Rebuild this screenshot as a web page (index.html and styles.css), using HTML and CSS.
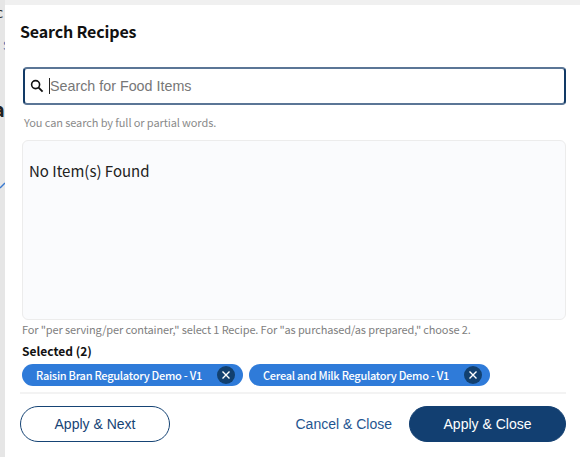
FILE: index.html
```html
<!DOCTYPE html>
<html lang="en">
<head>
<meta charset="utf-8">
<title>Search Recipes</title>
<link rel="stylesheet" href="styles.css">
</head>
<body>
<div class="backdrop">
  <span class="bg-band"></span>
  <span class="bg-a">c</span>
  <span class="bg-s">S</span>
  <span class="bg-b">a</span>
  <svg class="bg-tick" viewBox="0 0 5 8" width="5" height="8" aria-hidden="true"><path d="M0 7 L5 2" stroke="#3a7ad0" stroke-width="1.4" fill="none"/></svg>
</div>
<div class="modal">
  <h1 class="title">Search Recipes</h1>
  <div class="search">
    <svg class="search-icon" viewBox="0 0 14 14" width="14" height="14" aria-hidden="true"><circle cx="5.6" cy="5.6" r="4" fill="none" stroke="#111" stroke-width="1.6"/><path d="M8.6 8.6 L12.6 12.6" stroke="#111" stroke-width="1.8" fill="none"/></svg>
    <span class="caret"></span>
    <span class="placeholder">Search for Food Items</span>
  </div>
  <p class="hint">You can search by full or partial words.</p>
  <div class="results">No Item(s) Found</div>
  <p class="note">For "per serving/per container," select 1 Recipe. For "as purchased/as prepared," choose 2.</p>
  <div class="selected-label">Selected (2)</div>
  <div class="chips">
    <span class="chip">Raisin Bran Regulatory Demo - V1<span class="chip-x"><svg viewBox="0 0 10 10" width="10" height="10" aria-hidden="true"><path d="M1.5 1.5 L8.5 8.5 M8.5 1.5 L1.5 8.5" stroke="#fff" stroke-width="1.4" fill="none"/></svg></span></span>
    <span class="chip">Cereal and Milk Regulatory Demo - V1<span class="chip-x"><svg viewBox="0 0 10 10" width="10" height="10" aria-hidden="true"><path d="M1.5 1.5 L8.5 8.5 M8.5 1.5 L1.5 8.5" stroke="#fff" stroke-width="1.4" fill="none"/></svg></span></span>
  </div>
  <div class="footer">
    <button class="btn btn-outline">Apply &amp; Next</button>
    <div class="footer-right">
      <button class="btn-link">Cancel &amp; Close</button>
      <button class="btn btn-solid">Apply &amp; Close</button>
    </div>
  </div>
</div>
</body>
</html>
```
FILE: styles.css
```css
* { box-sizing: border-box; }
html, body { margin: 0; height: 100%; }
body {
  width: 580px;
  height: 457px;
  overflow: hidden;
  background: #f0f0f0;
  font-family: "Noto Sans CJK SC", "Noto Sans", sans-serif;
  padding: 5px 0 0 5px;
  position: relative;
}
.backdrop { position: absolute; inset: 0; overflow: hidden; }
.bg-band { position: absolute; left: 0; top: 0; width: 5px; height: 457px; background: #e6e6e6; }
.bg-a { position: absolute; left: -4px; top: 2px; font-size: 14px; color: #333; }
.bg-s { position: absolute; left: 3px; top: 36px; font-size: 12px; color: #3a6fb0; }
.bg-b { position: absolute; left: -7px; top: 94px; font-size: 20px; font-weight: 700; color: #222; }
.bg-tick { position: absolute; left: 0; top: 181px; }
.modal {
  position: relative;
  width: 575px;
  height: 452px;
  background: #fff;
  padding: 0 14px 0 15px;
}
.title { margin: 0; padding-top: 13px; font-size: 16px; line-height: 26px; font-weight: 700; color: #111; letter-spacing: -0.15px; }
.search {
  margin: 23px 0 0 3px;
  height: 38px;
  border: 2px solid #5b7696;
  border-left-color: #123a66;
  border-right-color: #123a66;
  border-radius: 4px;
  display: flex;
  align-items: center;
  padding-left: 5px;
}
.search-icon { flex: none; }
.caret { width: 1px; height: 16px; background: #222; margin-left: 5px; }
.placeholder { font-family: "Liberation Sans", Arial, sans-serif; font-size: 14.3px; color: #777; }
.hint { margin: 9px 0 0 4px; font-size: 11px; line-height: 16px; color: #8a8a8a; letter-spacing: -0.1px; }
.results {
  margin: 10px 0 0 2px;
  height: 180px;
  background: #fafbfd;
  border: 1px solid #ececec;
  border-radius: 6px;
  padding: 19px 6px 0;
  font-size: 15px;
  line-height: 22px;
  color: #222;
}
.note { margin: 1px 0 0 2px; font-size: 11px; line-height: 16px; color: #808080; letter-spacing: -0.13px; }
.selected-label { margin: 5px 0 0 2px; font-size: 12px; line-height: 18px; font-weight: 700; color: #111; }
.chips { display: flex; gap: 6px; margin: 4px 0 0 2px; }
.chip {
  display: inline-flex;
  align-items: center;
  height: 22px;
  padding: 0 8px 0 14px;
  border-radius: 11px;
  background: #2f7bd9;
  color: #fff;
  font-size: 11px;
  font-weight: 500;
  letter-spacing: -0.26px;
}
.chip-x {
  width: 18px;
  height: 18px;
  margin-left: 15px;
  border-radius: 50%;
  background: #12406f;
  display: flex;
  align-items: center;
  justify-content: center;
}
.footer {
  margin-top: 6px;
  border-top: 2px solid #f3f3f3;
  padding-top: 12px;
  display: flex;
  justify-content: space-between;
  align-items: center;
}
.footer-right { display: flex; align-items: center; gap: 17px; }
.btn {
  height: 36px;
  border-radius: 18px;
  font-family: "Liberation Sans", Arial, sans-serif;
  font-size: 14px;
  cursor: pointer;
}
.btn-outline { width: 150px; background: #fff; border: 1px solid #164475; color: #164475; }
.btn-solid { width: 157px; background: #123f71; border: 1px solid #123f71; color: #fff; }
.btn-link { background: none; border: 0; padding: 0; font-family: "Liberation Sans", Arial, sans-serif; font-size: 14px; color: #1f5590; }
```
